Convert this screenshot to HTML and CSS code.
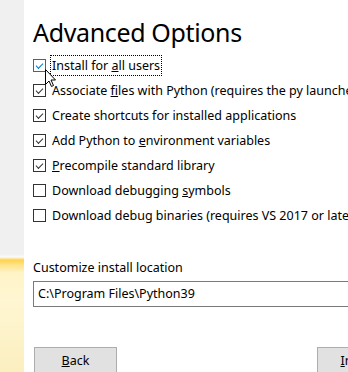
FILE: index.html
```html
<!DOCTYPE html>
<html lang="en">
<head>
    <meta charset="UTF-8">
    <title>Python 3.9 Setup - Advanced Options</title>
    <link rel="stylesheet" href="styles.css">
</head>
<body>
    <div class="window">
        <div class="sidebar"></div>

        <div class="main">
            <h1>Advanced Options</h1>

            <div class="options">
                <label class="option focused">
                    <span class="box checked hover"></span>
                    <span class="text">Install for <u>a</u>ll users</span>
                </label>
                <label class="option">
                    <span class="box checked"></span>
                    <span class="text">Associate <u>f</u>iles with Python (requires the py launcher)</span>
                </label>
                <label class="option">
                    <span class="box checked"></span>
                    <span class="text">Create shortcuts for installed applications</span>
                </label>
                <label class="option">
                    <span class="box checked"></span>
                    <span class="text">Add Python to <u>e</u>nvironment variables</span>
                </label>
                <label class="option">
                    <span class="box checked"></span>
                    <span class="text"><u>P</u>recompile standard library</span>
                </label>
                <label class="option">
                    <span class="box"></span>
                    <span class="text">Download debugging <u>s</u>ymbols</span>
                </label>
                <label class="option">
                    <span class="box"></span>
                    <span class="text">Download debu<u>g</u> binaries (requires VS 2017 or later)</span>
                </label>
            </div>

            <div class="location">
                <div class="location-label">Customize install location</div>
                <div class="location-input">C:\Program Files\Python39</div>
            </div>

            <div class="buttons">
                <button class="btn"><u>B</u>ack</button>
                <button class="btn"><u>I</u>nstall</button>
            </div>
        </div>

        <svg class="cursor" width="12" height="19" viewBox="0 0 12 19">
            <path d="M0.5 0.5 L0.5 15.5 L4 12 L6.5 17.5 L8.5 16.5 L6 11 L10.5 11 Z" fill="#fff" stroke="#000" stroke-width="1"/>
        </svg>
    </div>
</body>
</html>
```

FILE: styles.css
```css
body {
    margin: 0;
    padding: 0;
    background: #ffffff;
    font-family: "Noto Sans", "Open Sans", sans-serif;
    color: #000;
    overflow: hidden;
}
.window {
    position: relative;
    display: flex;
    width: 348px;
    height: 372px;
    overflow: hidden;
}
.sidebar {
    flex: 0 0 24px;
    height: 372px;
    background: linear-gradient(to bottom,
        #f0f0f0 0px, #f0f0f0 254px, #fafafa 257px,
        #ffd24e 260px, #ffe48a 265px, #fff4c8 273px,
        #fff6d2 300px, #fbefc0 372px);
}
.main {
    flex: 1;
    display: flex;
    flex-direction: column;
    padding-left: 9px;
    min-width: 0;
}
h1 {
    font-weight: normal;
    font-size: 25px;
    letter-spacing: -0.35px;
    line-height: 32px;
    margin: 16px 0 5px 0;
    white-space: nowrap;
}
.options {
    display: flex;
    flex-direction: column;
}
.option {
    display: flex;
    align-items: center;
    height: 25px;
    white-space: nowrap;
    font-size: 12.5px;
}
.option .text {
    margin-left: 4px;
    padding: 1px 1px;
    line-height: 17px;
    border: 1px solid transparent;
}
.option.focused .text {
    border: 1px dotted #000;
}
.box {
    position: relative;
    flex: 0 0 auto;
    width: 11px;
    height: 11px;
    border: 1px solid #333;
    background: #fff;
}
.box.hover {
    border-color: #0078d7;
}
.box.checked::after {
    content: "";
    position: absolute;
    left: 2px;
    top: 1px;
    width: 6px;
    height: 3px;
    border-left: 1px solid #333;
    border-bottom: 1px solid #333;
    transform: translate(0, 2px) rotate(-45deg);
}
.box.hover.checked::after {
    border-color: #0078d7;
}
.location {
    margin-top: 31px;
}
.location-label {
    font-size: 12.5px;
    line-height: 18px;
    white-space: nowrap;
}
.location-input {
    margin-top: 4px;
    height: 24px;
    line-height: 24px;
    padding-left: 4px;
    border: 1px solid #7a7a7a;
    border-right: none;
    font-size: 12.5px;
    white-space: nowrap;
}
.buttons {
    display: flex;
    justify-content: space-between;
    margin-top: 40px;
}
.btn {
    width: 83px;
    height: 26px;
    font-family: inherit;
    font-size: 12.5px;
    background: #e1e1e1;
    border: 1px solid #adadad;
    padding: 0;
    margin-left: 1px;
}
.btn:last-child {
    margin-right: -52px;
}
.cursor {
    position: absolute;
    left: 45px;
    top: 69px;
}
```
